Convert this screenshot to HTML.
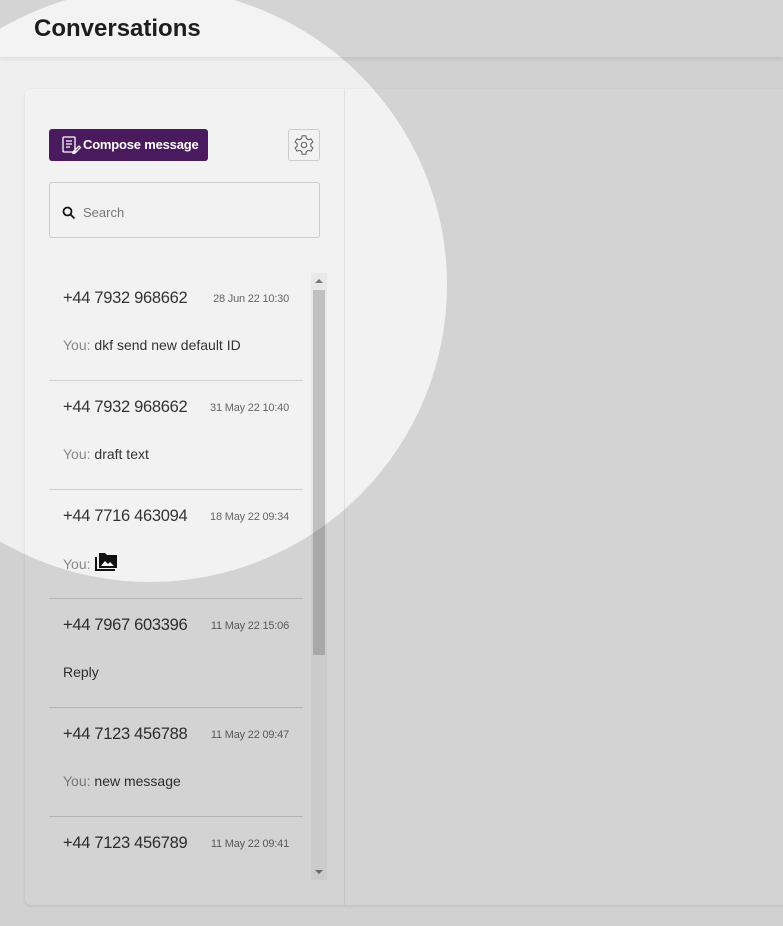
<!DOCTYPE html>
<html><head><style>
*{box-sizing:border-box;margin:0;padding:0}
body{width:783px;height:919px;overflow:hidden;background:#efefef;font-family:"Liberation Sans",sans-serif;position:relative}
.hdr{position:absolute;left:0;top:0;width:783px;height:57px;background:#f3f3f3;box-shadow:0 2px 4px rgba(0,0,0,.08)}
.hdr h1{position:absolute;left:34px;top:15px;font-size:24px;font-weight:bold;color:#1d1d1d}
.card{position:absolute;left:25px;top:89px;width:780px;height:816px;background:#f2f2f2;border-radius:6px;box-shadow:0 1px 3px rgba(0,0,0,.1)}
.left{position:absolute;left:0;top:0;width:320px;height:816px;border-right:1px solid #e2e2e2}
.btn{position:absolute;left:24px;top:40px;width:159px;height:32px;background:#4a1a5e;border-radius:3px;color:#fff;font-size:13px;font-weight:bold;padding:8px 0 0 34px;letter-spacing:-.2px}
.btn svg{position:absolute;left:13px;top:7px}
.gear{position:absolute;left:263px;top:40px;width:32px;height:32px;border:1px solid #ccc;border-radius:3px}
.gear svg{position:absolute;left:4px;top:4px}
.search{position:absolute;left:24px;top:93px;width:271px;height:56px;border:1px solid #ccc;border-radius:3px;font-size:13px;color:#777;padding:22px 0 0 33px}
.search svg{position:absolute;left:12px;top:23px}
.item{position:absolute;left:24px;width:254px;height:109px;border-bottom:1px solid #d0d0d0}
.ph{position:absolute;left:14px;top:17px;font-size:16.5px;color:#333;letter-spacing:-.3px}
.dt{position:absolute;right:14px;top:21px;font-size:11px;color:#666;letter-spacing:-.2px}
.msg{position:absolute;left:14px;top:65px;font-size:14px;color:#333}
.msg span{color:#888}
.sb{position:absolute;left:286px;top:184px;width:16px;height:607px;background:#e8e8e8}
.th{position:absolute;left:2px;top:17px;width:12px;height:365px;background:#c0c0c0}
.spot{position:absolute;left:-147px;top:-12px;width:594px;height:594px;border-radius:50%;box-shadow:0 0 0 2000px rgba(0,0,0,.125)}
</style></head><body>
<div class="hdr"><h1>Conversations</h1></div>
<div class="card"><div class="left">
<div class="btn"><svg width="20" height="18" viewBox="0 0 20 18" fill="none" stroke="#fff" stroke-width="1.3"><rect x="1" y="1" width="12" height="15" rx="1"/><path d="M4 5h6M4 8h6M4 11h4M11 16l6-6 1.5 1.5-6 6H11z"/></svg>Compose message</div>
<div class="gear"><svg width="22" height="22" viewBox="0 0 24 24" fill="none" stroke="#666" stroke-width="1.2"><circle cx="12" cy="12" r="3"/><path d="M10 2h4l.6 3 2.2 1.3 2.9-1 2 3.4-2.3 2v2.6l2.3 2-2 3.4-2.9-1-2.2 1.3-.6 3h-4l-.6-3-2.2-1.3-2.9 1-2-3.4 2.3-2v-2.6l-2.3-2 2-3.4 2.9 1L9.4 5z"/></svg></div>
<div class="search"><svg width="14" height="14" viewBox="0 0 14 14" fill="none" stroke="#111" stroke-width="1.8"><circle cx="5.5" cy="5.5" r="4"/><path d="M8.5 8.5l4 4"/></svg>Search</div>
<div class="item" style="top:183px"><div class="ph">+44 7932 968662</div><div class="dt">28 Jun 22 10:30</div><div class="msg"><span>You:</span> dkf send new default ID</div></div>
<div class="item" style="top:292px"><div class="ph">+44 7932 968662</div><div class="dt">31 May 22 10:40</div><div class="msg"><span>You:</span> draft text</div></div>
<div class="item" style="top:401px"><div class="ph">+44 7716 463094</div><div class="dt">18 May 22 09:34</div><div class="msg" style="top:62px"><span>You:</span> <svg width="24" height="20" viewBox="0 0 24 20" style="vertical-align:-3px"><path d="M1 5v14h20v-2H3V5z" fill="#111"/><path d="M5 1h6l2 2h10v13H5z" fill="#111"/><path d="M7 14l4-5 3 3 2-2 4 4z" fill="#fff"/></svg></div></div>
<div class="item" style="top:510px"><div class="ph">+44 7967 603396</div><div class="dt">11 May 22 15:06</div><div class="msg">Reply</div></div>
<div class="item" style="top:619px"><div class="ph">+44 7123 456788</div><div class="dt">11 May 22 09:47</div><div class="msg"><span>You:</span> new message</div></div>
<div class="item" style="top:728px;border:none"><div class="ph">+44 7123 456789</div><div class="dt">11 May 22 09:41</div></div>
<div class="sb"><div class="th"></div><div style="position:absolute;left:4px;top:6px;border:4px solid transparent;border-bottom:4px solid #777;border-top:0"></div><div style="position:absolute;left:4px;bottom:6px;border:4px solid transparent;border-top:4px solid #777;border-bottom:0"></div></div>
</div></div>
<div class="spot"></div>
</body></html>
